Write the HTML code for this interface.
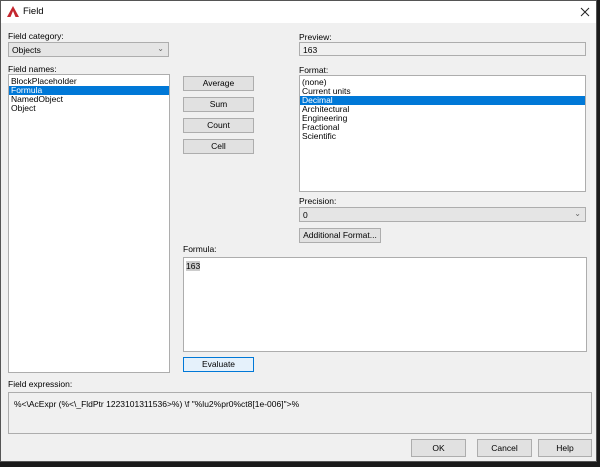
<!DOCTYPE html>
<html><head><style>
*{box-sizing:border-box;margin:0;padding:0}
body{width:600px;height:467px;background:#1a1a1a;position:relative;overflow:hidden;font-family:"Liberation Sans",sans-serif;font-size:8.5px;color:#000}
.win{position:absolute;left:0;top:0;width:597px;height:462px;background:#f0f0f0;border:1px solid #555}
.title{position:absolute;left:0;top:0;width:100%;height:22px;background:#fff}
.a{position:absolute}
.lbl{position:absolute;font-size:8.5px;color:#000}
.box{position:absolute;background:#fff;border:1px solid #adadad}
.ro{position:absolute;background:#f0f0f0;border:1px solid #adadad}
.combo{position:absolute;background:#e5e5e5;border:1px solid #adadad;padding:2px 3px}
.btn{position:absolute;background:#e1e1e1;border:1px solid #adadad;text-align:center;line-height:13px}
.it{height:9px;line-height:9px;padding-left:2px;white-space:nowrap}
.sel{background:#0078d7;color:#fff}
.chev{position:absolute;right:4px;top:1px;color:#666;font-size:8px}
</style></head><body>
<div class="win">
<div class="title">
<svg class="a" style="left:6px;top:5px" width="12" height="11"><polygon points="6,0 12,11 0,11" fill="#c4262e"/><polygon points="6,5 8.5,11 3.5,11" fill="#fff"/></svg>
<div class="lbl" style="left:22px;top:5px;font-size:9.5px">Field</div>
<svg class="a" style="left:579px;top:6px" width="10" height="10"><path d="M1 1L9 9M9 1L1 9" stroke="#222" stroke-width="1"/></svg>
</div>
<div class="lbl" style="left:7px;top:30px">Field category:</div>
<div class="combo" style="left:7px;top:41px;width:161px;height:15px">Objects<span class="chev">⌄</span></div>
<div class="lbl" style="left:7px;top:63px">Field names:</div>
<div class="box" style="left:7px;top:73px;width:162px;height:299px;padding-top:2px">
<div class="it">BlockPlaceholder</div><div class="it sel">Formula</div><div class="it">NamedObject</div><div class="it">Object</div></div>
<div class="btn" style="left:182px;top:75px;width:71px;height:15px">Average</div>
<div class="btn" style="left:182px;top:96px;width:71px;height:15px">Sum</div>
<div class="btn" style="left:182px;top:117px;width:71px;height:15px">Count</div>
<div class="btn" style="left:182px;top:138px;width:71px;height:15px">Cell</div>
<div class="lbl" style="left:298px;top:31px">Preview:</div>
<div class="ro" style="left:298px;top:41px;width:287px;height:14px;padding:2px 3px">163</div>
<div class="lbl" style="left:298px;top:64px">Format:</div>
<div class="box" style="left:298px;top:74px;width:287px;height:117px;padding-top:2px">
<div class="it">(none)</div><div class="it">Current units</div><div class="it sel">Decimal</div><div class="it">Architectural</div><div class="it">Engineering</div><div class="it">Fractional</div><div class="it">Scientific</div></div>
<div class="lbl" style="left:298px;top:195px">Precision:</div>
<div class="combo" style="left:298px;top:206px;width:287px;height:15px">0<span class="chev">⌄</span></div>
<div class="btn" style="left:298px;top:227px;width:82px;height:15px">Additional Format...</div>
<div class="lbl" style="left:182px;top:243px">Formula:</div>
<div class="box" style="left:182px;top:256px;width:404px;height:95px;padding:3px 2px"><span style="background:#ccc">163</span></div>
<div class="btn" style="left:182px;top:356px;width:71px;height:15px;border:1px solid #0078d7;background:#e5f1fb">Evaluate</div>
<div class="lbl" style="left:7px;top:378px">Field expression:</div>
<div class="ro" style="left:7px;top:391px;width:584px;height:42px;padding:6px 5px">%&lt;\AcExpr (%&lt;\_FldPtr 1223101311536&gt;%) \f "%lu2%pr0%ct8[1e-006]"&gt;%</div>
<div class="btn" style="left:410px;top:438px;width:55px;height:18px;line-height:16px">OK</div>
<div class="btn" style="left:476px;top:438px;width:55px;height:18px;line-height:16px">Cancel</div>
<div class="btn" style="left:537px;top:438px;width:54px;height:18px;line-height:16px">Help</div>
</div>
</body></html>
